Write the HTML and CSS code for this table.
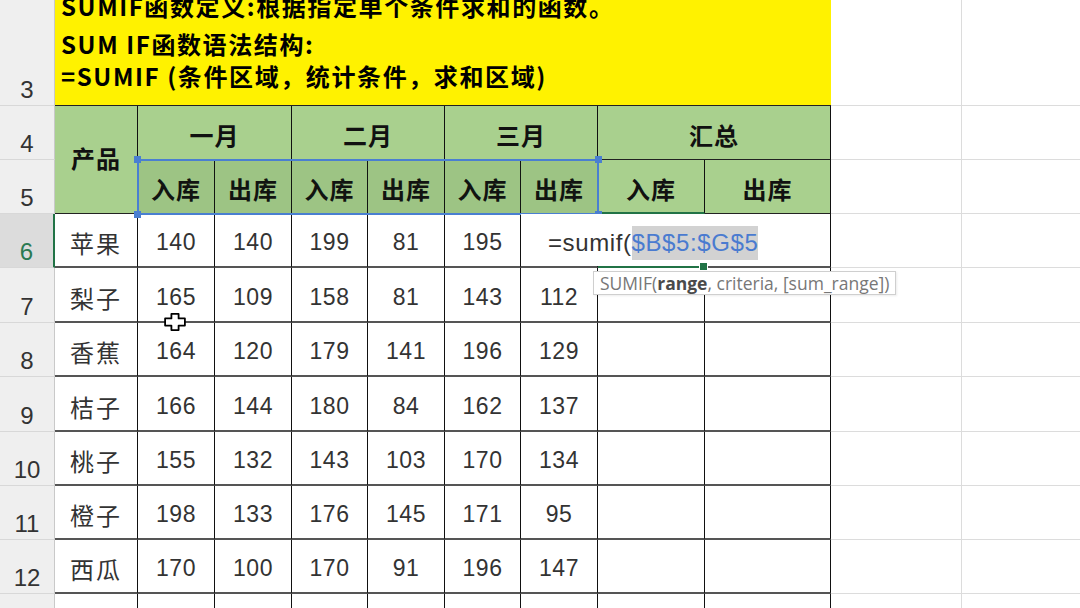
FILE: index.html
```html
<!DOCTYPE html>
<html lang="zh-CN">
<head>
<meta charset="utf-8">
<title>SUMIF</title>
<link rel="stylesheet" href="styles.css">
</head>
<body>
<div class="sheet">
  <!-- row 3 -->
  <div class="rh">3</div>
  <div class="note">
    <p class="first">SUMIF函数定义:根据指定单个条件求和的函数。</p>
    <p>SUM IF函数语法结构:</p>
    <p>=SUMIF (条件区域，统计条件，求和区域)</p>
  </div>
  <div class="gc"></div><div class="gc"></div>

  <!-- row 4 -->
  <div class="rh">4</div>
  <div class="hd prod">产品</div>
  <div class="hd span2">一月</div>
  <div class="hd span2">二月</div>
  <div class="hd span2">三月</div>
  <div class="hd span2">汇总</div>
  <div class="gc"></div><div class="gc"></div>

  <!-- row 5 -->
  <div class="rh">5</div>
  <div class="hd">入库</div><div class="hd">出库</div>
  <div class="hd">入库</div><div class="hd">出库</div>
  <div class="hd">入库</div><div class="hd">出库</div>
  <div class="hd above">入库</div><div class="hd">出库</div>
  <div class="gc"></div><div class="gc"></div>

  <!-- row 6 -->
  <div class="rh on">6</div>
  <div class="c name">苹果</div>
  <div class="c">140</div><div class="c">140</div><div class="c">199</div><div class="c">81</div><div class="c">195</div>
  <div class="c"></div><div class="c act"></div><div class="c"></div>
  <div class="gc"></div><div class="gc"></div>

  <!-- row 7 -->
  <div class="rh">7</div>
  <div class="c name">梨子</div>
  <div class="c">165</div><div class="c">109</div><div class="c">158</div><div class="c">81</div><div class="c">143</div><div class="c">112</div>
  <div class="c"></div><div class="c"></div>
  <div class="gc"></div><div class="gc"></div>

  <!-- row 8 -->
  <div class="rh">8</div>
  <div class="c name">香蕉</div>
  <div class="c">164</div><div class="c">120</div><div class="c">179</div><div class="c">141</div><div class="c">196</div><div class="c">129</div>
  <div class="c"></div><div class="c"></div>
  <div class="gc"></div><div class="gc"></div>

  <!-- row 9 -->
  <div class="rh">9</div>
  <div class="c name">桔子</div>
  <div class="c">166</div><div class="c">144</div><div class="c">180</div><div class="c">84</div><div class="c">162</div><div class="c">137</div>
  <div class="c"></div><div class="c"></div>
  <div class="gc"></div><div class="gc"></div>

  <!-- row 10 -->
  <div class="rh">10</div>
  <div class="c name">桃子</div>
  <div class="c">155</div><div class="c">132</div><div class="c">143</div><div class="c">103</div><div class="c">170</div><div class="c">134</div>
  <div class="c"></div><div class="c"></div>
  <div class="gc"></div><div class="gc"></div>

  <!-- row 11 -->
  <div class="rh">11</div>
  <div class="c name">橙子</div>
  <div class="c">198</div><div class="c">133</div><div class="c">176</div><div class="c">145</div><div class="c">171</div><div class="c">95</div>
  <div class="c"></div><div class="c"></div>
  <div class="gc"></div><div class="gc"></div>

  <!-- row 12 -->
  <div class="rh">12</div>
  <div class="c name">西瓜</div>
  <div class="c">170</div><div class="c">100</div><div class="c">170</div><div class="c">91</div><div class="c">196</div><div class="c">147</div>
  <div class="c"></div><div class="c"></div>
  <div class="gc"></div><div class="gc"></div>

  <!-- row 13 -->
  <div class="rh"></div>
  <div class="c"></div><div class="c"></div><div class="c"></div><div class="c"></div><div class="c"></div>
  <div class="c"></div><div class="c"></div><div class="c"></div><div class="c"></div>
  <div class="gc"></div><div class="gc"></div>

  <!-- overlays -->
  <div class="sel">
    <span class="hdl tl"></span><span class="hdl tr"></span>
    <span class="hdl bl"></span><span class="hdl br"></span>
  </div>
  <div class="editor">=sumif(<span class="ref">$B$5:$G$5</span></div>
  <div class="tip">SUMIF(<b>range</b>, criteria, [sum_range])</div>
  <svg class="cursor" viewBox="-1 -1 24 20" width="22" height="18">
    <path d="M7 0 H15 V5 H22 V13 H15 V18 H7 V13 H0 V5 H7 Z" fill="#fff" stroke="#000" stroke-width="2" stroke-linejoin="round"/>
  </svg>
</div>
</body>
</html>
```

FILE: styles.css
```css
* { box-sizing: border-box; }

body {
  margin: 0;
  width: 1080px;
  height: 608px;
  overflow: hidden;
  background: #fff;
  font-family: "Liberation Sans", "Noto Sans CJK SC", sans-serif;
}

.sheet {
  position: relative;
  display: grid;
  grid-template-columns: 55px 83px 77px 77px 76px 77px 76px 77px 107px 126px 131px 131px;
  grid-template-rows: 106px 54px 54px 54px 55px 54px 55px 54px 54px 54px 40px;
}

/* row headers */
.rh {
  display: flex;
  justify-content: center;
  align-items: flex-end;
  padding-bottom: 3px;
  background: #efefef;
  border-right: 1px solid #c9c9c9;
  border-bottom: 1px solid #d8d8d8;
  font-size: 24px;
  line-height: 1;
  color: #333;
}
.rh.on {
  background: #dcdcdc;
  color: #2a7a52;
  border-right: 2px solid #217346;
}

/* empty grid cells outside table */
.gc {
  border-right: 1px solid #dcdcdc;
  border-bottom: 1px solid #dcdcdc;
}

/* yellow note */
.note {
  grid-column: span 9;
  background: #fff200;
  border-bottom: 1px solid #222;
  display: flex;
  flex-direction: column;
  justify-content: flex-end;
  overflow: hidden;
  padding: 0 0 14px 6px;
  font-family: "Noto Sans CJK SC", sans-serif;
  font-weight: 700;
  font-size: 24px;
  letter-spacing: 1.6px;
  line-height: 31.5px;
  color: #000;
}
.note p {
  margin: 0;
  white-space: nowrap;
}
.note p.first { margin-bottom: 7px; }

/* header cells */
.hd {
  display: flex;
  justify-content: center;
  align-items: center;
  padding-top: 4px;
  background: #a9d08e;
  border-right: 1px solid #111;
  border-bottom: 1px solid #222;
  font-family: "Noto Sans CJK SC", sans-serif;
  font-weight: 700;
  font-size: 24px;
  letter-spacing: 1px;
  color: #111;
}
.hd.prod {
  grid-row: span 2;
  align-items: flex-start;
  padding-top: 34px;
}
.hd.span2 { grid-column: span 2; }
.hd.above { border-bottom: 2px solid #217346; }

/* data cells */
.c {
  display: flex;
  justify-content: center;
  align-items: center;
  padding-top: 5px;
  border-right: 1px solid #111;
  border-bottom: 2px solid #555;
  font-size: 23px;
  letter-spacing: 0.5px;
  color: #333;
}
.c.name {
  font-family: "Noto Sans CJK SC", sans-serif;
  font-size: 24px;
  letter-spacing: 2px;
}
.c.act {
  position: relative;
  border-bottom: 2px solid #217346;
}
.c.act::after {
  content: "";
  position: absolute;
  right: -4px;
  bottom: -5px;
  width: 7px;
  height: 7px;
  background: #217346;
  border: 1px solid #fff;
  z-index: 3;
}

/* selection B5:G5 */
.sel {
  position: absolute;
  grid-column: 3 / 9;
  grid-row: 3 / 4;
  top: -1px;
  left: -1px;
  right: -1px;
  bottom: -1px;
  border: 2px solid #4a7fd1;
  background: rgba(20, 60, 20, 0.08);
  z-index: 2;
}
.hdl {
  position: absolute;
  width: 7px;
  height: 7px;
  background: #4a7fd1;
}
.hdl.tl { top: -5px; left: -5px; }
.hdl.tr { top: -5px; right: -5px; }
.hdl.bl { bottom: -5px; left: -5px; }
.hdl.br { bottom: -5px; right: -5px; }

/* in-cell editor */
.editor {
  position: absolute;
  grid-column: 8 / 11;
  grid-row: 4 / 5;
  top: 0;
  left: 0;
  right: 1px;
  bottom: 2px;
  background: #fff;
  z-index: 2;
  display: flex;
  align-items: center;
  padding: 5px 0 0 27px;
  font-size: 24px;
  letter-spacing: 0.6px;
  color: #333;
  white-space: nowrap;
}
.ref {
  color: #4a7bd0;
  background: #d2d2d2;
  padding: 3px 0;
}

/* function tooltip */
.tip {
  position: absolute;
  grid-column: 9 / 10;
  grid-row: 5 / 6;
  left: -5px;
  top: 3px;
  z-index: 4;
  white-space: nowrap;
  background: #fff;
  border: 1px solid #cfcfcf;
  box-shadow: 1px 1px 2px rgba(0, 0, 0, 0.08);
  padding: 1px 6px;
  font-family: "Open Sans", sans-serif;
  font-size: 17.5px;
  line-height: 20px;
  color: #777;
}
.tip b { color: #4a4a4a; }

/* mouse cursor */
.cursor {
  position: absolute;
  grid-column: 3 / 4;
  grid-row: 5 / 6;
  left: 26px;
  top: 45px;
  z-index: 5;
}
```
